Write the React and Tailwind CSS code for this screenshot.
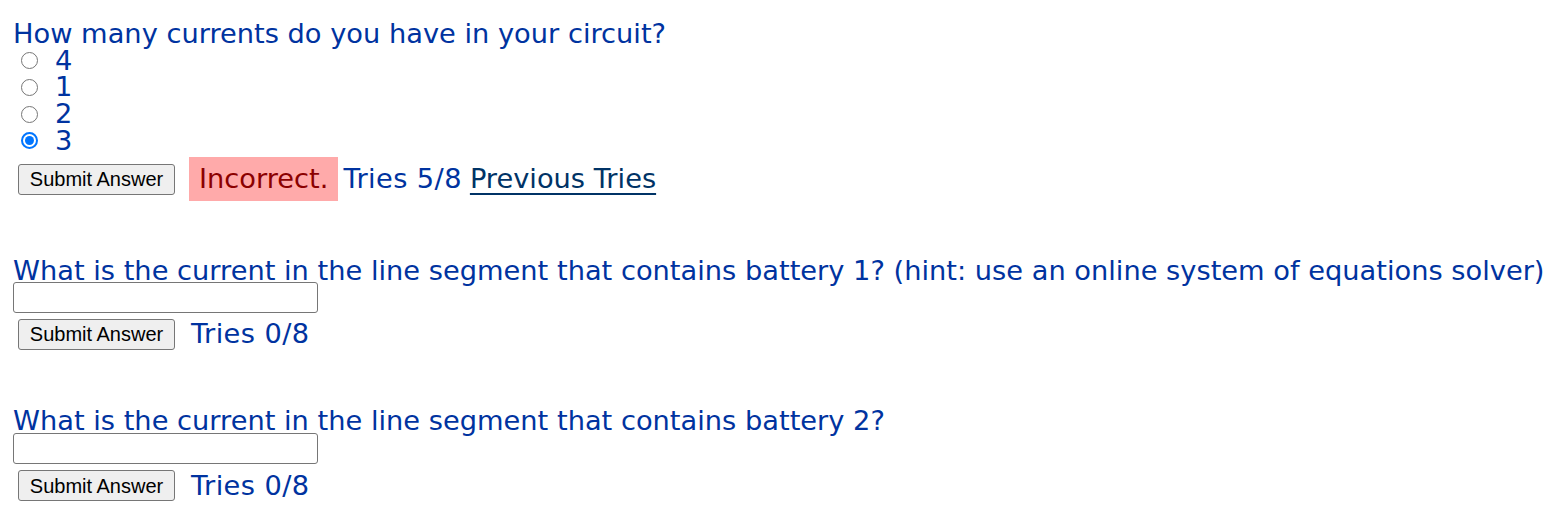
import React from "react";

const font = { fontFamily: '"DejaVu Sans", Verdana, sans-serif' };

function SubmitButton() {
  return (
    <button
      type="button"
      className="h-[31px] w-[157px] rounded-[3px] border border-[#767676] bg-[#efefef] text-[20px] leading-none text-black [font-family:'Liberation_Sans',Arial,sans-serif]"
    >
      Submit Answer
    </button>
  );
}

function Radio({ label, checked }) {
  return (
    <label className="flex h-[26.7px] items-center">
      {checked ? (
        <span className="ml-[8px] mr-[17px] flex h-[17px] w-[17px] shrink-0 items-center justify-center rounded-full border-[2px] border-[#0075ff] bg-white">
          <span className="h-[9px] w-[9px] rounded-full bg-[#0075ff]" />
        </span>
      ) : (
        <span className="ml-[8px] mr-[17px] h-[17px] w-[17px] shrink-0 rounded-full border-[1.5px] border-[#767676] bg-white" />
      )}
      <span>{label}</span>
    </label>
  );
}

export default function App() {
  return (
    <div
      className="min-h-[507px] w-[1552px] bg-white pl-[13px] pt-[21px] text-[27.25px] leading-[26.5px] text-[#0033a0]"
      style={font}
    >
      <div>How many currents do you have in your circuit?</div>
      <Radio label="4" />
      <Radio label="1" />
      <Radio label="2" />
      <Radio label="3" checked />
      <div className="mt-[3px] flex items-center">
        <div className="ml-[5px]">
          <SubmitButton />
        </div>
        <span className="ml-[14px] flex h-[44px] items-center bg-[#ffaaaa] px-[10px] text-[#8b0000]">
          Incorrect.
        </span>
        <span className="ml-[5px] tracking-[0.4px]">Tries 5/8</span>
        <a href="#" className="ml-[8px] text-[#003366] underline underline-offset-[5px] decoration-[2px]">
          Previous Tries
        </a>
      </div>

      <div className="mt-[58px] leading-[23.5px]">
        What is the current in the line segment that contains battery 1? (hint: use an online system of equations solver)
      </div>
      <input
        type="text"
        className="mt-[-1px] block h-[31px] w-[305px] rounded-[3px] border border-[#767676] bg-white"
      />
      <div className="mt-[6px] flex items-center">
        <div className="ml-[5px]">
          <SubmitButton />
        </div>
        <span className="ml-[16px] tracking-[0.4px]">Tries 0/8</span>
      </div>

      <div className="mt-[59px] leading-[23.5px]">
        What is the current in the line segment that contains battery 2?
      </div>
      <input
        type="text"
        className="mt-[1px] block h-[31px] w-[305px] rounded-[3px] border border-[#767676] bg-white"
      />
      <div className="mt-[6px] flex items-center">
        <div className="ml-[5px]">
          <SubmitButton />
        </div>
        <span className="ml-[16px] tracking-[0.4px]">Tries 0/8</span>
      </div>
    </div>
  );
}
